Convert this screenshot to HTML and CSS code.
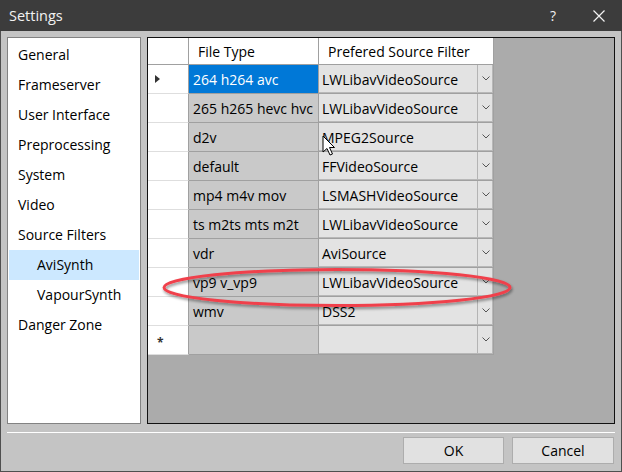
FILE: index.html
```html
<!DOCTYPE html>
<html>
<head>
<meta charset="utf-8">
<title>Settings</title>
<link rel="stylesheet" href="styles.css">
</head>
<body>
<div class="window">
  <div class="titlebar">
    <span class="title">Settings</span>
    <span class="help">?</span>
    <span class="close">
      <svg width="12" height="12" viewBox="0 0 12 12"><path d="M0.5 0.5 L11.5 11.5 M11.5 0.5 L0.5 11.5" stroke="#f2f2f2" stroke-width="1.2" fill="none"/></svg>
    </span>
  </div>
  <div class="body">
    <div class="main">
      <nav class="nav">
        <div class="item">General</div>
        <div class="item">Frameserver</div>
        <div class="item">User Interface</div>
        <div class="item">Preprocessing</div>
        <div class="item">System</div>
        <div class="item">Video</div>
        <div class="item">Source Filters</div>
        <div class="item sub selected">AviSynth</div>
        <div class="item sub">VapourSynth</div>
        <div class="item">Danger Zone</div>
      </nav>
      <div class="grid">
        <div class="row head">
          <div class="rh"></div>
          <div class="ft">File Type</div>
          <div class="sfh">Prefered Source Filter</div>
        </div>
        <div class="row">
          <div class="rh"><span class="cur"></span></div>
          <div class="ft sel">264 h264 avc</div>
          <div class="sf"><span class="val">LWLibavVideoSource</span><span class="dd"><svg width="8" height="5" viewBox="0 0 8 5"><path d="M0.5 0.5 L4 4 L7.5 0.5" stroke="#555" fill="none"/></svg></span></div>
        </div>
        <div class="row">
          <div class="rh"></div>
          <div class="ft">265 h265 hevc hvc</div>
          <div class="sf"><span class="val">LWLibavVideoSource</span><span class="dd"><svg width="8" height="5" viewBox="0 0 8 5"><path d="M0.5 0.5 L4 4 L7.5 0.5" stroke="#555" fill="none"/></svg></span></div>
        </div>
        <div class="row">
          <div class="rh"></div>
          <div class="ft">d2v</div>
          <div class="sf"><span class="val">MPEG2Source</span><span class="dd"><svg width="8" height="5" viewBox="0 0 8 5"><path d="M0.5 0.5 L4 4 L7.5 0.5" stroke="#555" fill="none"/></svg></span></div>
        </div>
        <div class="row">
          <div class="rh"></div>
          <div class="ft">default</div>
          <div class="sf"><span class="val">FFVideoSource</span><span class="dd"><svg width="8" height="5" viewBox="0 0 8 5"><path d="M0.5 0.5 L4 4 L7.5 0.5" stroke="#555" fill="none"/></svg></span></div>
        </div>
        <div class="row">
          <div class="rh"></div>
          <div class="ft">mp4 m4v mov</div>
          <div class="sf"><span class="val">LSMASHVideoSource</span><span class="dd"><svg width="8" height="5" viewBox="0 0 8 5"><path d="M0.5 0.5 L4 4 L7.5 0.5" stroke="#555" fill="none"/></svg></span></div>
        </div>
        <div class="row">
          <div class="rh"></div>
          <div class="ft">ts m2ts mts m2t</div>
          <div class="sf"><span class="val">LWLibavVideoSource</span><span class="dd"><svg width="8" height="5" viewBox="0 0 8 5"><path d="M0.5 0.5 L4 4 L7.5 0.5" stroke="#555" fill="none"/></svg></span></div>
        </div>
        <div class="row">
          <div class="rh"></div>
          <div class="ft">vdr</div>
          <div class="sf"><span class="val">AviSource</span><span class="dd"><svg width="8" height="5" viewBox="0 0 8 5"><path d="M0.5 0.5 L4 4 L7.5 0.5" stroke="#555" fill="none"/></svg></span></div>
        </div>
        <div class="row">
          <div class="rh"></div>
          <div class="ft">vp9 v_vp9</div>
          <div class="sf"><span class="val">LWLibavVideoSource</span><span class="dd"><svg width="8" height="5" viewBox="0 0 8 5"><path d="M0.5 0.5 L4 4 L7.5 0.5" stroke="#555" fill="none"/></svg></span></div>
        </div>
        <div class="row">
          <div class="rh"></div>
          <div class="ft">wmv</div>
          <div class="sf"><span class="val">DSS2</span><span class="dd"><svg width="8" height="5" viewBox="0 0 8 5"><path d="M0.5 0.5 L4 4 L7.5 0.5" stroke="#555" fill="none"/></svg></span></div>
        </div>
        <div class="row">
          <div class="rh"><span class="star">*</span></div>
          <div class="ft"></div>
          <div class="sf"><span class="val"></span><span class="dd"><svg width="8" height="5" viewBox="0 0 8 5"><path d="M0.5 0.5 L4 4 L7.5 0.5" stroke="#555" fill="none"/></svg></span></div>
        </div>
      </div>
    </div>
    <div class="sep"></div>
    <div class="buttons">
      <button class="btn">OK</button>
      <button class="btn">Cancel</button>
    </div>
  </div>
  <svg class="overlay" width="622" height="472" viewBox="0 0 622 472">
    <defs>
      <filter id="sh" x="-10%" y="-50%" width="120%" height="200%">
        <feGaussianBlur in="SourceAlpha" stdDeviation="1.5"/>
        <feOffset dx="1" dy="2" result="b"/>
        <feComponentTransfer><feFuncA type="linear" slope="0.45"/></feComponentTransfer>
        <feMerge><feMergeNode/><feMergeNode in="SourceGraphic"/></feMerge>
      </filter>
    </defs>
    <ellipse cx="337" cy="287.5" rx="173" ry="18" fill="none" stroke="#f0414b" stroke-width="3" filter="url(#sh)"/>
    <path d="M323 136 L323 152 L327 148.5 L330 155 L332.5 154 L329.5 147.5 L334.5 147.5 Z" fill="#fff" stroke="#000" stroke-width="1" stroke-linejoin="round"/>
  </svg>
</div>
</body>
</html>
```

FILE: styles.css
```css
* { box-sizing: border-box; }
html, body { margin: 0; padding: 0; }
body {
  width: 622px;
  height: 472px;
  overflow: hidden;
  font-family: "Open Sans", "Noto Sans", sans-serif;
  font-size: 14px;
  color: #000;
}
.window {
  position: relative;
  width: 622px;
  height: 472px;
  background: #c4c4c4;
  border: 1px solid #4f4f4f;
  border-top: none;
  display: flex;
  flex-direction: column;
}
.titlebar {
  height: 31px;
  background: #3c3c3c;
  color: #f2f2f2;
  display: flex;
  align-items: center;
  margin: 0 -1px;
  padding-left: 9px;
  flex: none;
}
.title { font-size: 14.5px; flex: 1; }
.help { font-size: 14px; width: 46px; text-align: center; }
.close { width: 46px; display: flex; justify-content: center; align-items: center; }
.body {
  flex: 1;
  padding: 6px 6px 0 6px;
  display: flex;
  flex-direction: column;
}
.main {
  height: 387px;
  display: flex;
  gap: 6px;
  flex: none;
}
.nav {
  width: 134px;
  background: #fff;
  border: 1px solid #828282;
  padding-top: 2px;
}
.item {
  height: 30px;
  line-height: 30px;
  padding-left: 9px;
  margin: 0 1px;
  white-space: nowrap;
}
.item.sub { padding-left: 28px; }
.item.selected { background: #cce8ff; }
.grid {
  flex: 1;
  background: #ababab;
  border: 1px solid #111;
}
.row { display: flex; height: 29px; }
.row.head { height: 27px; }
.rh {
  width: 41px;
  background: #fff;
  border-right: 1px solid #a0a0a0;
  border-bottom: 1px solid #dedede;
  position: relative;
  display: flex;
  align-items: center;
}
.ft {
  width: 130px;
  background: #c9c9c9;
  border-right: 1px solid #a0a0a0;
  border-bottom: 1px solid #a0a0a0;
  padding-left: 4px;
  display: flex;
  align-items: center;
  white-space: nowrap;
  overflow: hidden;
}
.head .ft, .sfh {
  background: #fff;
  padding-left: 9px;
}
.head .rh { border-bottom: 1px solid #a0a0a0; }
.sfh {
  width: 175px;
  border-right: 1px solid #a0a0a0;
  border-bottom: 1px solid #a0a0a0;
  display: flex;
  align-items: center;
  white-space: nowrap;
}
.ft.sel { background: #0078d7; color: #fff; }
.sf {
  width: 175px;
  background: #e3e3e3;
  border-right: 1px solid #a0a0a0;
  border-bottom: 1px solid #a0a0a0;
  box-shadow: inset 0 -1px 0 #b8b8b8, inset -1px 0 0 #b8b8b8;
  display: flex;
  align-items: stretch;
}
.val {
  flex: 1;
  padding-left: 3px;
  display: flex;
  align-items: center;
  white-space: nowrap;
}
.dd {
  width: 16px;
  border-left: 1px solid #b4b4b4;
  display: flex;
  align-items: center;
  justify-content: center;
  margin-bottom: 1px;
}
.cur {
  margin-left: 7px;
  width: 0;
  height: 0;
  border-top: 4px solid transparent;
  border-bottom: 4px solid transparent;
  border-left: 5px solid #333;
}
.star {
  margin-left: 9px;
  font-size: 12px;
  color: #333;
  font-weight: bold;
  line-height: 1;
  margin-top: 6px;
}
.sep {
  height: 1px;
  background: #fff;
  margin-top: 8px;
  flex: none;
}
.buttons {
  display: flex;
  justify-content: flex-end;
  gap: 8px;
  margin-top: 4px;
  margin-right: 1px;
}
.btn {
  font-family: "Open Sans", "Noto Sans", sans-serif;
  font-size: 14px;
  color: #000;
  height: 27px;
  background: #e1e1e1;
  border: 1px solid #adadad;
  padding: 0;
  width: 101px;
}
.btn + .btn { width: 102px; }
.overlay {
  position: absolute;
  left: -1px;
  top: 0;
  pointer-events: none;
}
```
